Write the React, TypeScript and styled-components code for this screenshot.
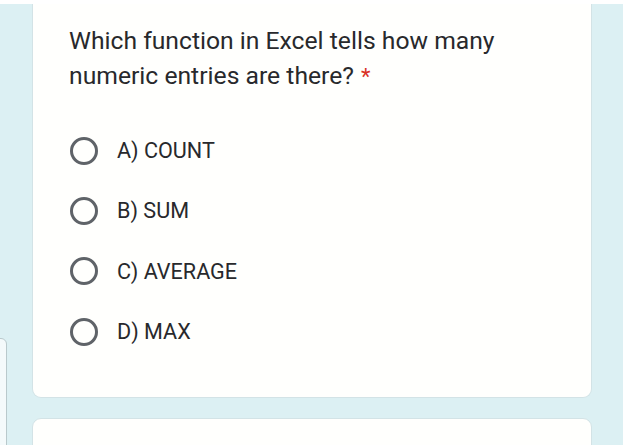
import React from "react"
import styled, { createGlobalStyle } from "styled-components"

const options = ["A) COUNT", "B) SUM", "C) AVERAGE", "D) MAX"]

const GlobalStyle = createGlobalStyle`
	html, body {
		margin: 0;
		padding: 0;
		background: #dcf0f3;
		font-family: Roboto, "Liberation Sans", sans-serif;
		overflow: hidden;
	}
`

const Page = styled.div`
	position: relative;
	width: 623px;
	height: 445px;
	display: flex;
	flex-direction: column;
	overflow: hidden;
	background: #dcf0f3;
`

const TopStrip = styled.div`
	height: 4px;
	background: #ffffff;
	flex-shrink: 0;
`

const SidePanel = styled.div`
	position: absolute;
	left: -10px;
	top: 338px;
	width: 15px;
	height: 140px;
	background: #f4fafb;
	border: 1px solid #b9c9cc;
	border-radius: 6px;
`

const Card = styled.div`
	margin-left: 32px;
	width: 560px;
	box-sizing: border-box;
	background: #fffffd;
	border: 1px solid #d3e3e6;
	border-radius: 0 0 9px 9px;
	border-top: none;
	flex-shrink: 0;
`

const QuestionCard = styled(Card)`
	height: 394px;
	padding: 19px 0 0 36px;
`

const NextCard = styled(Card)`
	margin-top: 20px;
	height: 60px;
	border-top: 1px solid #d3e3e6;
	border-radius: 9px 9px 0 0;
`

const Question = styled.div`
	font-size: 24.7px;
	line-height: 35px;
	color: #28292c;
	width: 460px;
`

const Required = styled.span`
	color: #d93025;
	margin-left: 7px;
	font-size: 22px;
`

const OptionList = styled.div`
	display: flex;
	flex-direction: column;
	gap: 33px;
	margin-top: 43px;
`

const Option = styled.div`
	display: flex;
	align-items: center;
	gap: 19px;
	height: 27.3px;
`

const Radio = styled.div`
	width: 22px;
	height: 22px;
	border: 3px solid #5f6368;
	border-radius: 50%;
	margin-left: 1px;
`

const Label = styled.div`
	font-size: 21.6px;
	color: #28292c;
`

export default function App() {
	return (
		<Page>
			<GlobalStyle />
			<TopStrip />
			<QuestionCard>
				<Question>
					Which function in Excel tells how many numeric entries are there?
					<Required>*</Required>
				</Question>
				<OptionList>
					{options.map((o) => (
						<Option key={o}>
							<Radio />
							<Label>{o}</Label>
						</Option>
					))}
				</OptionList>
			</QuestionCard>
			<NextCard />
			<SidePanel />
		</Page>
	)
}
